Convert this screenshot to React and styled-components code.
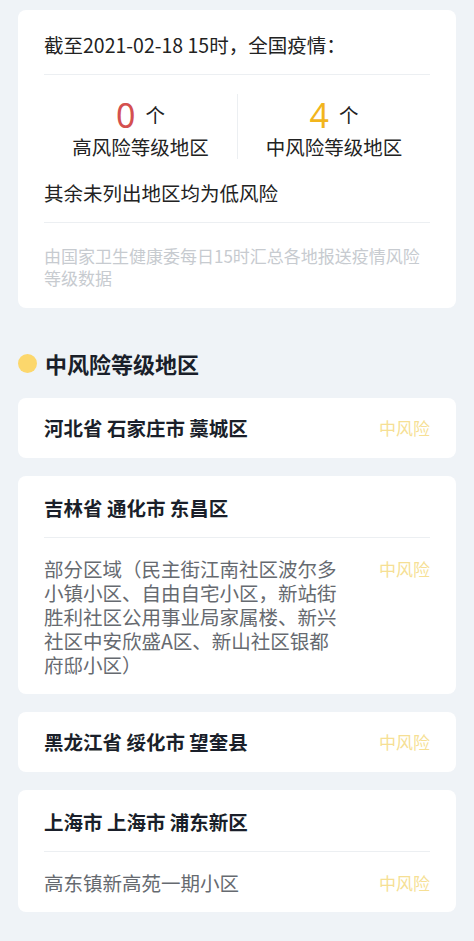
import React from "react";
import styled, { createGlobalStyle } from "styled-components";

const Global = createGlobalStyle`
  html, body {
    margin: 0;
    padding: 0;
    background: #eff3f7;
  }
  body {
    font-family: "Noto Sans CJK SC", "Noto Sans", sans-serif;
    color: #222;
  }
`;

const Page = styled.div`
  width: 474px;
  box-sizing: border-box;
  padding: 10px 18px 30px;
  display: flex;
  flex-direction: column;
`;

const Card = styled.div`
  background: #fff;
  border-radius: 8px;
  padding: 0 26px;
  margin-bottom: ${(p) => p.$gap ?? 18}px;
`;

const Header = styled.div`
  font-size: 19.5px;
  line-height: 26px;
  padding: 22px 0 16px;
  border-bottom: 1px solid #eceff2;
  color: #222;
`;

const Stats = styled.div`
  display: grid;
  grid-template-columns: 1fr 1fr;
  padding-top: 19px;
`;

const Stat = styled.div`
  display: flex;
  flex-direction: column;
  align-items: center;
  height: 65px;
  & + & {
    border-left: 1px solid #eceff2;
  }
`;

const Count = styled.div`
  height: 41px;
  display: flex;
  align-items: center;
  font-size: 19.5px;
  line-height: 26px;
  color: #222;
  span {
    font-size: 34px;
    line-height: 36px;
    font-family: "Noto Sans", sans-serif;
    color: ${(p) => p.$color};
    margin-right: 10px;
  }
`;

const StatLabel = styled.div`
  font-size: 19.5px;
  line-height: 24px;
  color: #222;
`;

const Rest = styled.div`
  font-size: 19.5px;
  line-height: 26px;
  padding: 21px 0 16px;
  border-bottom: 1px solid #eceff2;
  color: #222;
`;

const Note = styled.div`
  font-size: 17px;
  line-height: 22px;
  color: #c7cbd0;
  padding: 22px 0 19px;
`;

const Section = styled.div`
  display: flex;
  align-items: center;
  height: 30px;
  margin: 40px 0 20px;
  font-size: 22px;
  font-weight: 700;
  color: #1a1f2a;
`;

const Dot = styled.span`
  width: 19px;
  height: 19px;
  border-radius: 50%;
  background: #fcd76c;
  margin-right: 8px;
`;

const Row = styled.div`
  display: flex;
  justify-content: space-between;
  align-items: flex-start;
  gap: 20px;
  padding: ${(p) => p.$pad};
  border-bottom: ${(p) => (p.$line ? "1px solid #eceff2" : "none")};
`;

const Place = styled.div`
  font-size: 19.5px;
  line-height: 26px;
  font-weight: 700;
  color: #1a1f2a;
`;

const Detail = styled.div`
  font-size: 19.5px;
  line-height: 24px;
  color: #666a70;
  max-width: 300px;
`;

const Tag = styled.div`
  font-size: 17px;
  line-height: 24px;
  color: #f6df94;
  white-space: nowrap;
  margin-top: ${(p) => p.$top || 0}px;
`;

const areas = [
  { place: "河北省 石家庄市 藁城区" },
  {
    place: "吉林省 通化市 东昌区",
    detail:
      "部分区域（民主街江南社区波尔多小镇小区、自由自宅小区，新站街胜利社区公用事业局家属楼、新兴社区中安欣盛A区、新山社区银都府邸小区）",
  },
  { place: "黑龙江省 绥化市 望奎县" },
  { place: "上海市 上海市 浦东新区", detail: "高东镇新高苑一期小区" },
];

function AreaCard({ place, detail }) {
  if (!detail) {
    return (
      <Card>
        <Row $pad="17px 0">
          <Place>{place}</Place>
          <Tag $top={1}>中风险</Tag>
        </Row>
      </Card>
    );
  }
  return (
    <Card>
      <Row $pad="19px 0 16px" $line>
        <Place>{place}</Place>
      </Row>
      <Row $pad="19px 0 17px">
        <Detail>{detail}</Detail>
        <Tag>中风险</Tag>
      </Row>
    </Card>
  );
}

export default function App() {
  return (
    <Page>
      <Global />
      <Card $gap={0}>
        <Header>截至2021-02-18 15时，全国疫情：</Header>
        <Stats>
          <Stat>
            <Count $color="#d4504f">
              <span>0</span>个
            </Count>
            <StatLabel>高风险等级地区</StatLabel>
          </Stat>
          <Stat>
            <Count $color="#f2b51d">
              <span>4</span>个
            </Count>
            <StatLabel>中风险等级地区</StatLabel>
          </Stat>
        </Stats>
        <Rest>其余未列出地区均为低风险</Rest>
        <Note>由国家卫生健康委每日15时汇总各地报送疫情风险等级数据</Note>
      </Card>
      <Section>
        <Dot />
        中风险等级地区
      </Section>
      {areas.map((a) => (
        <AreaCard key={a.place} {...a} />
      ))}
    </Page>
  );
}
